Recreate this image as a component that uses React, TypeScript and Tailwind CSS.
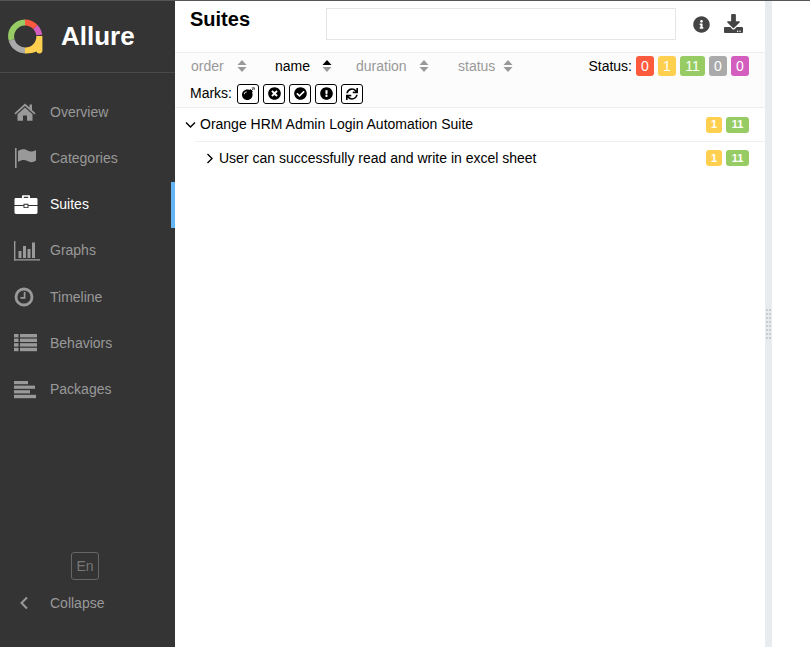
import React from "react";
import { FaInfoCircle, FaDownload, FaBomb, FaTimesCircle, FaCheckCircle, FaExclamationCircle, FaSync, FaSort, FaSortUp, FaSortDown, FaChevronDown, FaChevronRight, FaAngleLeft } from "react-icons/fa";

const HomeIcon = () => (
  <svg width="22" height="18" viewBox="0 0 22 18" fill="currentColor"><path d="M11 0.5 L15.5 4.6 V1.5 H18 V6.9 L21.6 10.2 L20.5 11.4 L11 3 L1.5 11.4 L0.4 10.2 Z" /><path d="M11 4.6 L18.5 11.2 V17.8 H13 V12.5 H9 V17.8 H3.5 V11.2 Z" /></svg>
);
const FlagIcon = () => (
  <svg width="24" height="20" viewBox="0 0 24 20" fill="currentColor"><rect x="1" y="0" width="1.6" height="20" /><path d="M4 3 C8 0.5 11 1 13.5 2.5 C16.5 4 19 3.8 22 2 V12.5 C19 14.6 16 14.6 13.5 13 C11 11.6 8 11.4 4 14 Z" /></svg>
);
const CaseIcon = () => (
  <svg width="24" height="20" viewBox="0 0 24 20" fill="currentColor"><path d="M8 3 V1.2 C8 0.6 8.5 0.2 9 0.2 H15 C15.5 0.2 16 0.6 16 1.2 V3 H22 C23 3 23.5 3.6 23.5 4.4 V10 H14.5 V8.8 H9.5 V10 H0.5 V4.4 C0.5 3.6 1 3 2 3 Z M9.8 3 H14.2 V1.8 H9.8 Z" fillRule="evenodd" /><path d="M0.5 11 H9.5 V13 H14.5 V11 H23.5 V17.6 C23.5 18.4 23 19 22 19 H2 C1 19 0.5 18.4 0.5 17.6 Z" /><rect x="10.5" y="9.8" width="3" height="2.4" /></svg>
);
const ChartIcon = () => (
  <svg width="26" height="20" viewBox="0 0 26 20" fill="currentColor"><rect x="0" y="0" width="1.4" height="19.5" /><rect x="0" y="18.2" width="26" height="1.3" /><rect x="4.5" y="10" width="3" height="7" /><rect x="9" y="5" width="3" height="12" /><rect x="13.5" y="8" width="3" height="9" /><rect x="18" y="1.5" width="3" height="15.5" /></svg>
);
const ClockIcon = () => (
  <svg width="20" height="20" viewBox="0 0 20 20" fill="none" stroke="currentColor"><circle cx="10" cy="10" r="8" strokeWidth="2.8" /><path d="M10.6 5 V10.8 H6.4" strokeWidth="1.7" /></svg>
);
const ListIcon = () => (
  <svg width="23" height="18" viewBox="0 0 23 18" fill="currentColor">
    <rect x="0" y="0" width="4.5" height="3.4" /><rect x="6" y="0" width="17" height="3.4" />
    <rect x="0" y="4.6" width="4.5" height="3.4" /><rect x="6" y="4.6" width="17" height="3.4" />
    <rect x="0" y="9.2" width="4.5" height="3.4" /><rect x="6" y="9.2" width="17" height="3.4" />
    <rect x="0" y="13.8" width="4.5" height="3.4" /><rect x="6" y="13.8" width="17" height="3.4" />
  </svg>
);
const PackIcon = () => (
  <svg width="23" height="18" viewBox="0 0 23 18" fill="currentColor">
    <rect x="0" y="0" width="14" height="3.2" /><rect x="0" y="4.6" width="21" height="3.2" /><rect x="0" y="9.2" width="16" height="3.2" /><rect x="0" y="13.8" width="22" height="3.4" />
  </svg>
);
const Logo = () => (
  <svg width="35" height="35" viewBox="0 0 35 35" fill="none">
    <path d="M17 3.4 A14 14 0 0 0 3.6 21" stroke="#97cc64" strokeWidth="6" />
    <path d="M3.6 21 A14 14 0 0 0 17 31.4" stroke="#aaaaaa" strokeWidth="6" />
    <path d="M17 3.4 A14 14 0 0 1 27.4 8" stroke="#fd5a3e" strokeWidth="6" />
    <path d="M27.4 8 A14 14 0 0 1 31.2 16" stroke="#d35ebe" strokeWidth="6" />
    <path d="M17 31.4 A14 14 0 0 0 31.4 17.5 V31 C31.4 33 32 34 33.5 34 H17 Z" fill="none" />
    <path d="M17 28.4 A11 11 0 0 0 28.4 17 H34.4 V31.5 C34.4 33.5 33 34.5 31.5 34.5 C29.8 34.5 28.8 33.5 28.5 32.5 C26 33.8 21 34.6 17 34.4 Z" fill="#ffd050" />
  </svg>
);

const nav: [string, React.ReactNode, boolean][] = [
  ["Overview", <HomeIcon />, false],
  ["Categories", <FlagIcon />, false],
  ["Suites", <CaseIcon />, true],
  ["Graphs", <ChartIcon />, false],
  ["Timeline", <ClockIcon />, false],
  ["Behaviors", <ListIcon />, false],
  ["Packages", <PackIcon />, false],
];

const Sort = ({ active }: { active?: boolean }) => (
  <span className="relative inline-block w-[10px] h-[14px] text-[#999999]">
    <svg width="10" height="14" viewBox="0 0 10 14" className="absolute inset-0">
      <path d="M0.5 6 L5 1 L9.5 6 Z" fill={active ? "#000000" : "#999999"} />
      <path d="M0.5 8 L5 13 L9.5 8 Z" fill="#999999" />
    </svg>
  </span>
);

const Mark = ({ children }: { children: React.ReactNode }) => (
  <span className="flex items-center justify-center w-[22px] h-[20px] border border-black rounded-[3px] bg-white text-black text-[13px]">{children}</span>
);

const Big = ({ c, w, children }: { c: string; w: string; children: React.ReactNode }) => (
  <span className={`${c} ${w} h-[20px] rounded-[3px] flex items-center justify-center text-white text-[14px]`}>{children}</span>
);

const Small = ({ c, w, children }: { c: string; w: string; children: React.ReactNode }) => (
  <span className={`${c} ${w} h-[16px] rounded-[3px] flex items-center justify-center text-white text-[11px] font-bold`}>{children}</span>
);

const Counts = () => (
  <span className="flex gap-[4px]">
    <Small c="bg-[#ffd050]" w="w-[16px]">1</Small>
    <Small c="bg-[#97cc64]" w="w-[23px]">11</Small>
  </span>
);

export default function App() {
  return (
    <div className="relative flex w-[810px] h-[647px] overflow-hidden bg-white text-[14px] text-black" style={{ fontFamily: '"Liberation Sans", Arial, sans-serif' }}>
      <div className="absolute top-0 left-0 right-0 h-px bg-[#555555]" />
      <aside className="w-[175px] h-full shrink-0 flex flex-col bg-[#343434]">
        <div className="h-[73px] shrink-0 flex items-center border-b border-[#4a4a4a] pl-[8px]">
          <Logo />
          <span className="ml-[18px] text-white text-[26px] font-bold leading-none">Allure</span>
        </div>
        <nav className="mt-[16px] flex flex-col">
          {nav.map(([label, icon, active]) => (
            <div key={label} className={`relative h-[46.25px] flex items-center ${active ? "text-white" : "text-[#999999]"}`}>
              <span className="w-[50px] pl-[14px] flex items-center shrink-0">{icon}</span>
              <span>{label}</span>
              {active && <span className="absolute right-0 top-0 bottom-0 w-[4px] bg-[#64b5f6]" />}
            </div>
          ))}
        </nav>
        <div className="mt-auto flex flex-col">
          <div className="flex justify-center pr-[5px]">
            <span className="w-[28px] h-[28px] flex items-center justify-center border border-[#666666] rounded-[3px] text-[#777777] text-[14px]">En</span>
          </div>
          <div className="h-[46px] mb-[21px] flex items-center text-[#999999]">
            <span className="w-[50px] pl-[19px] shrink-0">
              <svg width="10" height="14" viewBox="0 0 10 14" fill="none" stroke="currentColor" strokeWidth="2"><path d="M8 1.5 L2.5 7 L8 12.5" /></svg>
            </span>
            <span>Collapse</span>
          </div>
        </div>
      </aside>

      <main className="w-[590px] h-full shrink-0 flex flex-col">
        <header className="h-[53px] shrink-0 relative flex items-start border-b border-[#eeeeee] pt-[8px]">
          <h2 className="ml-[15px] w-[136px] text-[20px] font-bold leading-[23px]">Suites</h2>
          <div className="w-[350px] h-[32px] border border-[#e5e5e5] bg-white" />
          <span className="ml-[17px] mt-[8px] text-[#444444]"><FaInfoCircle size={17} /></span>
          <span className="ml-[14px] mt-[6px] text-[#444444]"><FaDownload size={19} /></span>
        </header>
        <div className="h-[55px] shrink-0 bg-[#fcfcfc] border-b border-[#eeeeee] px-[16px] pt-[3px]">
          <div className="flex items-center h-[20px]">
            <span className="w-[46px] text-[#999999]">order</span><Sort />
            <span className="ml-[28px] w-[47px] text-black">name</span><Sort active />
            <span className="ml-[24px] w-[63px] text-[#999999]">duration</span><Sort />
            <span className="ml-[29px] w-[45px] text-[#999999]">status</span><Sort />
            <span className="ml-auto mr-[4px]">Status:</span>
            <span className="flex gap-[4px]">
              <Big c="bg-[#fd5a3e]" w="w-[18px]">0</Big>
              <Big c="bg-[#ffd050]" w="w-[18px]">1</Big>
              <Big c="bg-[#97cc64]" w="w-[25px]">11</Big>
              <Big c="bg-[#aaaaaa]" w="w-[18px]">0</Big>
              <Big c="bg-[#d35ebe]" w="w-[18px]">0</Big>
            </span>
          </div>
          <div className="flex items-center gap-[4px] mt-[7px] -ml-px">
            <span className="mr-px">Marks:</span>
            <Mark><FaBomb /></Mark>
            <Mark><FaTimesCircle /></Mark>
            <Mark><FaCheckCircle /></Mark>
            <Mark><FaExclamationCircle /></Mark>
            <Mark><FaSync size={12} /></Mark>
          </div>
        </div>
        <div className="h-[33px] shrink-0 flex items-center pl-[10px] pr-[16px] ml-0">
          <svg width="11" height="8" viewBox="0 0 11 8" fill="none" stroke="black" strokeWidth="1.4"><path d="M1 1.5 L5.5 6 L10 1.5" /></svg>
          <span className="ml-[4px]">Orange HRM Admin Login Automation Suite</span>
          <span className="ml-auto"><Counts /></span>
        </div>
        <div className="h-[33px] shrink-0 ml-[20px] border-t border-[#eeeeee] flex items-center pl-[11px] pr-[16px]">
          <svg width="8" height="11" viewBox="0 0 8 11" fill="none" stroke="black" strokeWidth="1.4"><path d="M1.5 1 L6 5.5 L1.5 10" /></svg>
          <span className="ml-[5px]">User can successfully read and write in excel sheet</span>
          <span className="ml-auto"><Counts /></span>
        </div>
      </main>

      <div className="w-[7px] h-full shrink-0 bg-[#e9ecef] flex items-center justify-center">
        <div className="grid grid-cols-2 gap-x-px gap-y-[2px]">
          {[0,1,2,3,4,5,6,7,8,9,10,11,12,13,14,15].map((i) => <span key={i} className="w-[2px] h-[2px] bg-[#cccccc]" />)}
        </div>
      </div>
      <div className="flex-1" />
    </div>
  );
}
